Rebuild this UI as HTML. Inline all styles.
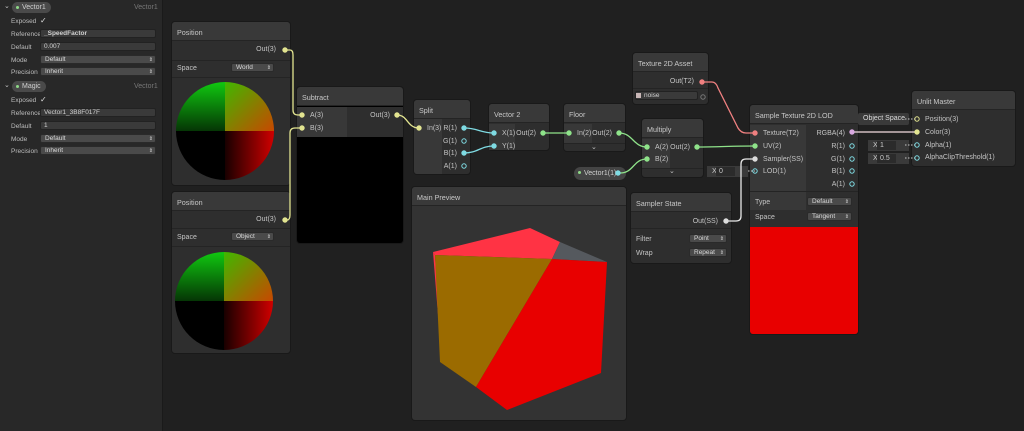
<!DOCTYPE html>
<html><head><meta charset="utf-8"><style>
*{margin:0;padding:0;box-sizing:border-box}
body{width:1024px;height:431px;background:#202020;font-family:"Liberation Sans",sans-serif;font-size:7px;color:#c4c4c4;position:relative;overflow:hidden}
.a{position:absolute}
.lp{left:0;top:0;width:163px;height:431px;background:#282828;border-right:1px solid #1a1a1a}
.node{position:absolute;background:#2e2e2e;border-radius:3px;box-shadow:0 0 0 1px #191919}
.hd{position:absolute;left:0;right:0;top:0;height:19px;background:#393939;border-radius:3px 3px 0 0;padding:6px 0 0 5px;color:#c8c8c8;font-size:7.2px;border-bottom:1px solid #242424}
.t{position:absolute;white-space:nowrap}
.fld{position:absolute;background:#3a3a3a;border:1px solid #222;border-radius:2px;height:9px;color:#d0d0d0;padding:0 3px;line-height:8px;font-size:6.5px}
.dd{position:absolute;background:#4a4a4a;border:1px solid #2a2a2a;border-radius:2px;height:9px;color:#d8d8d8;padding:0 4px;line-height:8px;font-size:6.5px}
.dd:after{content:"⇕";position:absolute;right:2px;top:0;font-size:5px}
.pill{position:absolute;background:#4a4a4a;border-radius:6px;height:11px;padding:0 5px 0 10px;line-height:11px;color:#d0d0d0;font-size:7px}
.pill:before{content:"";position:absolute;left:4px;top:4px;width:3px;height:3px;border-radius:50%;background:#8ed887}
.lbl{position:absolute;left:11px;color:#bdbdbd;font-size:6.5px}
.sep{position:absolute;left:0;right:0;height:1px;background:#242424}
</style></head><body>
<div class="a lp">
<div class="t" style="left:4px;top:2px;font-size:7px">⌄</div>
<div class="pill" style="left:12px;top:2px">Vector1</div>
<div class="t" style="left:134px;top:4px;color:#777">Vector1</div>
<div class="lbl" style="top:18px">Exposed</div><div class="t" style="left:40px;top:16px;color:#ddd;font-size:8px">✓</div>
<div class="lbl" style="top:31px">Reference</div><div class="fld" style="left:40px;top:29px;width:116px;font-weight:bold">_SpeedFactor</div>
<div class="lbl" style="top:44px">Default</div><div class="fld" style="left:40px;top:42px;width:116px">0.007</div>
<div class="lbl" style="top:57px">Mode</div><div class="dd" style="left:40px;top:55px;width:116px">Default</div>
<div class="lbl" style="top:69px">Precision</div><div class="dd" style="left:40px;top:67px;width:116px">Inherit</div>
<div class="t" style="left:4px;top:81px;font-size:7px">⌄</div>
<div class="pill" style="left:12px;top:81px">Magic</div>
<div class="t" style="left:134px;top:83px;color:#777">Vector1</div>
<div class="lbl" style="top:97px">Exposed</div><div class="t" style="left:40px;top:95px;color:#ddd;font-size:8px">✓</div>
<div class="lbl" style="top:110px">Reference</div><div class="fld" style="left:40px;top:108px;width:116px">Vector1_3B8F017F</div>
<div class="lbl" style="top:123px">Default</div><div class="fld" style="left:40px;top:121px;width:116px">1</div>
<div class="lbl" style="top:136px">Mode</div><div class="dd" style="left:40px;top:134px;width:116px">Default</div>
<div class="lbl" style="top:148px">Precision</div><div class="dd" style="left:40px;top:146px;width:116px">Inherit</div>
</div>

<div class="node" style="left:172px;top:22px;width:118px;height:163px">
<div class="hd">Position</div>
<div class="t" style="right:14px;top:24px">Out(3)</div>
<div class="sep" style="top:38px"></div>
<div class="t" style="left:5px;top:43px">Space</div><div class="dd" style="left:59px;top:41px;width:43px">World</div>
<div class="sep" style="top:55px"></div>
</div>
<div class="node" style="left:172px;top:192px;width:118px;height:161px">
<div class="hd">Position</div>
<div class="t" style="right:14px;top:24px">Out(3)</div>
<div class="sep" style="top:36px"></div>
<div class="t" style="left:5px;top:42px">Space</div><div class="dd" style="left:59px;top:40px;width:43px">Object</div>
<div class="sep" style="top:54px"></div>
</div>
<div class="node" style="left:297px;top:87px;width:106px;height:156px;background:#000">
<div class="a" style="left:0;top:20px;width:106px;height:30px;background:#2e2e2e"></div>
<div class="a" style="left:0;top:20px;width:50px;height:30px;background:#383838"></div>
<div class="hd">Subtract</div>
<div class="t" style="left:13px;top:25px">A(3)</div><div class="t" style="left:13px;top:38px">B(3)</div>
<div class="t" style="right:13px;top:25px">Out(3)</div>
</div>
<div class="node" style="left:414px;top:100px;width:56px;height:74px">
<div class="a" style="left:0;top:19px;width:28px;height:55px;background:#383838;border-radius:0 0 0 3px"></div>
<div class="hd">Split</div>
<div class="t" style="left:13px;top:25px">In(3)</div>
<div class="t" style="right:13px;top:25px">R(1)</div><div class="t" style="right:13px;top:38px">G(1)</div>
<div class="t" style="right:13px;top:50px">B(1)</div><div class="t" style="right:13px;top:63px">A(1)</div>
</div>
<div class="node" style="left:489px;top:104px;width:60px;height:46px">
<div class="a" style="left:0;top:20px;width:26px;height:26px;background:#383838"></div>
<div class="hd">Vector 2</div>
<div class="t" style="left:13px;top:26px">X(1)</div><div class="t" style="left:13px;top:39px">Y(1)</div>
<div class="t" style="right:13px;top:26px">Out(2)</div>
</div>
<div class="node" style="left:564px;top:104px;width:61px;height:47px">
<div class="a" style="left:0;top:20px;width:28px;height:19px;background:#383838"></div>
<div class="hd">Floor</div>
<div class="t" style="left:13px;top:26px">In(2)</div>
<div class="t" style="right:13px;top:26px">Out(2)</div>
<div class="sep" style="top:39px"></div>
<div class="t" style="left:27px;top:39px;font-size:7px">⌄</div>
</div>
<div class="node" style="left:642px;top:119px;width:61px;height:58px">
<div class="a" style="left:0;top:20px;width:28px;height:30px;background:#383838"></div>
<div class="hd">Multiply</div>
<div class="t" style="left:13px;top:25px">A(2)</div><div class="t" style="left:13px;top:37px">B(2)</div>
<div class="t" style="right:13px;top:25px">Out(2)</div>
<div class="sep" style="top:49px"></div>
<div class="t" style="left:27px;top:48px">⌄</div>
</div>
<div class="pill" style="left:574px;top:167px;width:52px;height:13px;line-height:13px;background:#444;border-radius:7px">Vector1(1)</div>
<div class="node" style="left:633px;top:53px;width:75px;height:51px">
<div class="hd">Texture 2D Asset</div>
<div class="t" style="right:14px;top:25px">Out(T2)</div>
<div class="sep" style="top:35px"></div>
<div class="fld" style="left:2px;top:38px;width:63px;padding-left:8px">noise</div>
<div class="a" style="left:3px;top:40px;width:5px;height:5px;background:#c9b7b7"></div>
</div>
<div class="node" style="left:750px;top:105px;width:108px;height:229px">
<div class="a" style="left:0;top:20px;width:56px;height:85px;background:#383838"></div>
<div class="hd">Sample Texture 2D LOD</div>
<div class="t" style="left:13px;top:25px">Texture(T2)</div><div class="t" style="left:13px;top:38px">UV(2)</div>
<div class="t" style="left:13px;top:51px">Sampler(SS)</div><div class="t" style="left:13px;top:63px">LOD(1)</div>
<div class="t" style="right:13px;top:25px">RGBA(4)</div><div class="t" style="right:13px;top:38px">R(1)</div>
<div class="t" style="right:13px;top:51px">G(1)</div><div class="t" style="right:13px;top:63px">B(1)</div><div class="t" style="right:13px;top:76px">A(1)</div>
<div class="sep" style="top:86px"></div>
<div class="t" style="left:5px;top:94px">Type</div><div class="dd" style="left:57px;top:92px;width:45px">Default</div>
<div class="t" style="left:5px;top:109px">Space</div><div class="dd" style="left:57px;top:107px;width:45px">Tangent</div>
<div class="a" style="left:0;top:122px;width:108px;height:107px;background:#e80000;border-radius:0 0 3px 3px"></div>
</div>
<div class="node" style="left:912px;top:91px;width:103px;height:75px">
<div class="hd">Unlit Master</div>
<div class="t" style="left:13px;top:25px">Position(3)</div><div class="t" style="left:13px;top:38px">Color(3)</div>
<div class="t" style="left:13px;top:51px">Alpha(1)</div><div class="t" style="left:13px;top:63px">AlphaClipThreshold(1)</div>
</div>
<div class="a" style="left:858px;top:113px;width:51px;height:12px;background:#3a3a3a;border-radius:2px;padding:2px 0 0 5px;color:#ddd">Object Space</div>
<div class="a" style="left:868px;top:140px;width:41px;height:11px;background:#3a3a3a;padding:2px 0 0 5px;color:#ccc">X<span class="a" style="left:9px;top:1px;width:19px;height:9px;background:#2b2b2b;padding:1px 0 0 3px">1</span></div>
<div class="a" style="left:868px;top:153px;width:41px;height:11px;background:#3a3a3a;padding:2px 0 0 5px;color:#ccc">X<span class="a" style="left:9px;top:1px;width:19px;height:9px;background:#2b2b2b;padding:1px 0 0 3px">0.5</span></div>
<div class="a" style="left:707px;top:166px;width:41px;height:11px;background:#3a3a3a;padding:2px 0 0 5px;color:#ccc">X<span class="a" style="left:9px;top:1px;width:19px;height:9px;background:#2b2b2b;padding:1px 0 0 3px">0</span></div>
<div class="node" style="left:412px;top:187px;width:214px;height:233px;background:#333">
<div class="hd">Main Preview</div>
</div>
<div class="node" style="left:631px;top:193px;width:100px;height:70px">
<div class="hd">Sampler State</div>
<div class="t" style="right:13px;top:25px">Out(SS)</div>
<div class="sep" style="top:35px"></div>
<div class="t" style="left:5px;top:43px">Filter</div><div class="dd" style="left:58px;top:41px;width:38px">Point</div>
<div class="t" style="left:5px;top:57px">Wrap</div><div class="dd" style="left:58px;top:55px;width:38px">Repeat</div>
</div>

<svg class="a" style="left:0;top:0" width="1024" height="431" viewBox="0 0 1024 431">
<defs>
<linearGradient id="gtl" x1="0" y1="0" x2="0" y2="1"><stop offset="0" stop-color="#10c810"/><stop offset="1" stop-color="#053505"/></linearGradient>
<linearGradient id="gtr" x1="0" y1="0" x2="1" y2="1"><stop offset="0" stop-color="#40b800"/><stop offset="1" stop-color="#c84800"/></linearGradient>
<linearGradient id="gbr" x1="0" y1="0" x2="1" y2="0"><stop offset="0" stop-color="#180000"/><stop offset="1" stop-color="#d00000"/></linearGradient>
</defs>
<clipPath id="c1"><circle cx="225" cy="131" r="49"/></clipPath>
<g clip-path="url(#c1)">
<rect x="176" y="82" width="49" height="49" fill="url(#gtl)"/>
<rect x="225" y="82" width="49" height="49" fill="url(#gtr)"/>
<rect x="225" y="131" width="49" height="49" fill="url(#gbr)"/>
<rect x="176" y="131" width="49" height="49" fill="#000"/>
</g>
<clipPath id="c2"><circle cx="224" cy="301" r="49"/></clipPath>
<g clip-path="url(#c2)">
<rect x="175" y="252" width="49" height="49" fill="url(#gtl)"/>
<rect x="224" y="252" width="49" height="49" fill="url(#gtr)"/>
<rect x="224" y="301" width="49" height="49" fill="url(#gbr)"/>
<rect x="175" y="301" width="49" height="49" fill="#000"/>
</g>
<polygon points="433,252 530,228 560,242 552,259 435,255" fill="#ff3344"/>
<polygon points="560,242 607,262 552,259" fill="#55595e"/>
<polygon points="433,252 435,255 442,365" fill="#ff3344"/>
<polygon points="435,255 552,259 476,387 440,362" fill="#9b6b00"/>
<polygon points="552,259 607,262 601,373 507,410 476,387" fill="#e80000"/>
<g fill="none" stroke-width="1.3">
<path d="M285,50 H290 Q293,50 293,55 V110 Q293,115 298,115 H302" stroke="#e2e490"/>
<path d="M285,220 H287 Q290,220 290,215 V133 Q290,128 295,128 H302" stroke="#e2e490"/>
<path d="M397,115 C408,115 407,128 419,128" stroke="#e2e490"/>
<path d="M464,128 C478,128 480,133 494,133" stroke="#7fdbe3"/>
<path d="M464,153 C478,153 480,146 494,146" stroke="#7fdbe3"/>
<path d="M543,133 H569" stroke="#8fe38a"/>
<path d="M619,133 C633,133 633,147 647,147" stroke="#8fe38a"/>
<path d="M620,173 C634,173 633,159 647,159" stroke="#8fe38a"/>
<path d="M697,147 C720,147 730,146 755,146" stroke="#8fe38a"/>
<path d="M702,82 H712 Q716,82 718,88 L738,128 Q741,133 746,133 H755" stroke="#f08080"/>
<path d="M726,221 H736 Q741,221 741,216 V164 Q741,159 746,159 H755" stroke="#e8e8e8"/>
<path d="M852,132 H917" stroke="#f2dbe0"/>
<path d="M748,171 H755 M905,119 H917 M905,145 H917 M905,158 H917" stroke="#aaa" stroke-dasharray="1.5,1.5"/>
</g>
<g stroke-width="1">
<g fill="#e2e490" stroke="#e2e490"><circle cx="285" cy="50" r="2.2"/><circle cx="285" cy="220" r="2.2"/><circle cx="302" cy="115" r="2.2"/><circle cx="302" cy="128" r="2.2"/><circle cx="397" cy="115" r="2.2"/><circle cx="419" cy="128" r="2.2"/><circle cx="917" cy="132" r="2.2"/></g>
<g fill="#7fdbe3" stroke="#7fdbe3"><circle cx="464" cy="128" r="2.2"/><circle cx="464" cy="153" r="2.2"/><circle cx="494" cy="133" r="2.2"/><circle cx="494" cy="146" r="2.2"/><circle cx="618" cy="173" r="2.2"/></g>
<g fill="none" stroke="#7fdbe3"><circle cx="464" cy="141" r="2.2"/><circle cx="464" cy="166" r="2.2"/><circle cx="755" cy="171" r="2.2"/><circle cx="852" cy="146" r="2.2"/><circle cx="852" cy="159" r="2.2"/><circle cx="852" cy="171" r="2.2"/><circle cx="852" cy="184" r="2.2"/><circle cx="917" cy="145" r="2.2"/><circle cx="917" cy="158" r="2.2"/></g>
<circle cx="917" cy="119" r="2.2" fill="none" stroke="#e2e490"/>
<g fill="#8fe38a" stroke="#8fe38a"><circle cx="543" cy="133" r="2.2"/><circle cx="569" cy="133" r="2.2"/><circle cx="619" cy="133" r="2.2"/><circle cx="647" cy="147" r="2.2"/><circle cx="647" cy="159" r="2.2"/><circle cx="697" cy="147" r="2.2"/><circle cx="755" cy="146" r="2.2"/></g>
<g fill="#f08080" stroke="#f08080"><circle cx="702" cy="82" r="2.2"/><circle cx="755" cy="133" r="2.2"/></g>
<circle cx="703" cy="97" r="2.2" fill="none" stroke="#777"/>
<g fill="#ddd" stroke="#ddd"><circle cx="726" cy="221" r="2.2"/><circle cx="755" cy="159" r="2.2"/></g>
<circle cx="852" cy="132" r="2.2" fill="#d8a8e0" stroke="#d8a8e0"/>
</g>
</svg>
</body></html>
